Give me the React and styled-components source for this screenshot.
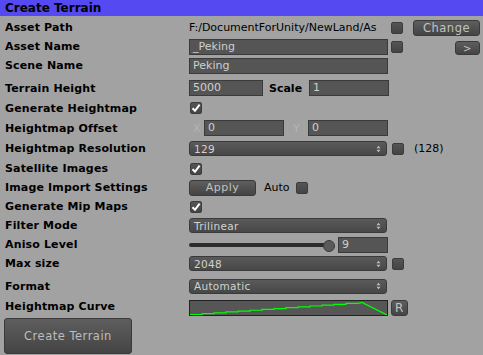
import React from "react";
import styled, { createGlobalStyle } from "styled-components";

const GlobalStyle = createGlobalStyle`
  html, body {
    margin: 0;
    padding: 0;
    background: #a2a2a2;
  }
  body {
    font-family: "DejaVu Sans", "Liberation Sans", sans-serif;
    font-size: 11px;
  }
`;

const Window = styled.div`
  width: 483px;
  height: 355px;
  overflow: hidden;
  background: #a2a2a2;
  display: flex;
  flex-direction: column;
`;

const TitleBar = styled.div`
  height: 16px;
  background: #5549f2;
  color: #000;
  font-weight: bold;
  font-size: 12px;
  line-height: 16px;
  padding-left: 5px;
`;

const Body = styled.div`
  display: flex;
  flex-direction: column;
  padding-top: 2px;
`;

const Row = styled.div`
  display: grid;
  grid-template-columns: 189px 1fr;
  align-items: center;
  height: ${(p) => p.h || 19}px;
  margin-top: ${(p) => p.mt || 0}px;
`;

const Label = styled.div`
  padding-left: 5px;
  font-weight: bold;
  color: #000;
  white-space: nowrap;
  letter-spacing: 0.15px;
`;

const Controls = styled.div`
  display: flex;
  align-items: center;
  height: 100%;
`;

const ValueText = styled.span`
  width: 199px;
  color: #000;
  white-space: nowrap;
  overflow: hidden;
`;

const Field = styled.div`
  box-sizing: border-box;
  width: ${(p) => p.w || 199}px;
  height: 16px;
  margin-left: ${(p) => p.ml || 0}px;
  background: #555555;
  border: 1px solid #3a3a3a;
  color: #cfcfcf;
  padding-left: 3px;
  line-height: 14px;
  white-space: nowrap;
`;

const Checkbox = styled.div`
  box-sizing: border-box;
  width: 12px;
  height: 12px;
  margin-left: ${(p) => p.ml || 0}px;
  margin-top: ${(p) => p.mt || 0}px;
  border-radius: 2px;
  background: linear-gradient(#555555, #444444);
  border: 1px solid #3c3c3c;
  display: flex;
  align-items: center;
  justify-content: center;
`;

const Button = styled.div`
  box-sizing: border-box;
  width: ${(p) => p.w}px;
  height: ${(p) => p.h || 16}px;
  margin-left: ${(p) => p.ml || 0}px;
  margin-top: ${(p) => p.mt || 0}px;
  border-radius: 3px;
  background: linear-gradient(#5e5e5e, #444444);
  border: 1px solid #3a3a3a;
  color: #c2c2c2;
  font-size: ${(p) => p.fs || 11}px;
  letter-spacing: 0.5px;
  display: flex;
  align-items: center;
  justify-content: center;
`;

const Dropdown = styled.div`
  box-sizing: border-box;
  width: 198px;
  height: 15px;
  border-radius: 3px;
  background: linear-gradient(#5a5a5a, #474747);
  border: 1px solid #3a3a3a;
  color: #d2d2d2;
  font-size: 10.5px;
  padding: 0 5px 0 4px;
  display: flex;
  align-items: center;
  justify-content: space-between;
  letter-spacing: 0.3px;
`;

const InlineLabel = styled.span`
  margin-left: ${(p) => p.ml || 0}px;
  width: ${(p) => p.w || "auto"};
  font-weight: ${(p) => (p.bold ? "bold" : "normal")};
  color: ${(p) => p.color || "#000"};
`;

const SliderTrack = styled.div`
  position: relative;
  width: 141px;
  height: 4px;
  border-radius: 2px;
  background: #2c2c2c;
  margin-right: 8px;
`;

const SliderKnob = styled.div`
  position: absolute;
  right: -5px;
  top: -3px;
  width: 10px;
  height: 10px;
  border-radius: 50%;
  background: #5a5a5a;
  border: 0.5px solid #3a3a3a;
`;

const CurveBox = styled.div`
  box-sizing: border-box;
  width: 199px;
  height: 16px;
  background: #565656;
  border: 1px solid #222;
  margin-top: 4px;
`;

const BottomButton = styled(Button)`
  margin-left: 4px;
  margin-top: 3px;
  color: #bdbdbd;
`;

const Check = () => (
  <svg width="10" height="10" viewBox="0 0 10 10">
    <path d="M1.5 5.2 L4 7.8 L8.6 1.6" stroke="#fff" strokeWidth="2" fill="none" />
  </svg>
);

const Arrows = () => (
  <svg width="5" height="8" viewBox="0 0 5 8">
    <path d="M0.5 3.2 L2.5 0.8 L4.5 3.2 Z M0.5 4.8 L2.5 7.2 L4.5 4.8 Z" fill="#bdbdbd" />
  </svg>
);

function Select({ value }) {
  return (
    <Dropdown>
      <span>{value}</span>
      <Arrows />
    </Dropdown>
  );
}

const curvePoints = (() => {
  const pts = [];
  let x = 0;
  let y = 13.5;
  while (x < 168) {
    pts.push(`${x},${y}`);
    x += 12;
    pts.push(`${x},${y}`);
    y -= 0.85;
  }
  pts.push("172,1.5");
  pts.push("197,14");
  return pts.join(" ");
})();

export default function App() {
  return (
    <Window>
      <GlobalStyle />
      <TitleBar>Create Terrain</TitleBar>
      <Body>
        <Row>
          <Label>Asset Path</Label>
          <Controls>
            <ValueText>F:/DocumentForUnity/NewLand/As</ValueText>
            <Checkbox ml={3} />
            <Button w={67} ml={10} fs={11.5}>Change</Button>
          </Controls>
        </Row>
        <Row>
          <Label>Asset Name</Label>
          <Controls>
            <Field>_Peking</Field>
            <Checkbox ml={3} />
            <Button w={25} h={14} ml={52} mt={3} fs={10}>&gt;</Button>
          </Controls>
        </Row>
        <Row>
          <Label>Scene Name</Label>
          <Controls>
            <Field>Peking</Field>
          </Controls>
        </Row>
        <Row h={20} mt={3}>
          <Label>Terrain Height</Label>
          <Controls>
            <Field w={74}>5000</Field>
            <InlineLabel bold ml={6}>Scale</InlineLabel>
            <Field w={80} ml={7}>1</Field>
          </Controls>
        </Row>
        <Row h={20}>
          <Label>Generate Heightmap</Label>
          <Controls>
            <Checkbox ml={1}><Check /></Checkbox>
          </Controls>
        </Row>
        <Row h={20}>
          <Label>Heightmap Offset</Label>
          <Controls>
            <InlineLabel ml={4} w="11px" color="#b4b4b4">X</InlineLabel>
            <Field w={80}>0</Field>
            <InlineLabel ml={9} w="15px" color="#b4b4b4">Y</InlineLabel>
            <Field w={80}>0</Field>
          </Controls>
        </Row>
        <Row h={21}>
          <Label>Heightmap Resolution</Label>
          <Controls>
            <Select value="129" />
            <Checkbox ml={5} />
            <InlineLabel ml={10}>(128)</InlineLabel>
          </Controls>
        </Row>
        <Row>
          <Label>Satellite Images</Label>
          <Controls>
            <Checkbox ml={1}><Check /></Checkbox>
          </Controls>
        </Row>
        <Row>
          <Label>Image Import Settings</Label>
          <Controls>
            <Button w={67} fs={11}>Apply</Button>
            <InlineLabel ml={8}>Auto</InlineLabel>
            <Checkbox ml={6} />
          </Controls>
        </Row>
        <Row>
          <Label>Generate Mip Maps</Label>
          <Controls>
            <Checkbox ml={1}><Check /></Checkbox>
          </Controls>
        </Row>
        <Row>
          <Label>Filter Mode</Label>
          <Controls>
            <Select value="Trilinear" />
          </Controls>
        </Row>
        <Row>
          <Label>Aniso Level</Label>
          <Controls>
            <SliderTrack>
              <SliderKnob />
            </SliderTrack>
            <Field w={50}>9</Field>
          </Controls>
        </Row>
        <Row>
          <Label>Max size</Label>
          <Controls>
            <Select value="2048" />
            <Checkbox ml={5} />
          </Controls>
        </Row>
        <Row h={20} mt={3}>
          <Label>Format</Label>
          <Controls>
            <Select value="Automatic" />
          </Controls>
        </Row>
        <Row>
          <Label>Heightmap Curve</Label>
          <Controls>
            <CurveBox>
              <svg width="197" height="14" viewBox="0 0 197 14">
                <polyline points={curvePoints} fill="none" stroke="#00ff00" strokeWidth="1.2" />
              </svg>
            </CurveBox>
            <Button w={17} mt={4} ml={3} fs={12}>R</Button>
          </Controls>
        </Row>
        <BottomButton w={128} h={36} fs={11.5}>Create Terrain</BottomButton>
      </Body>
    </Window>
  );
}
